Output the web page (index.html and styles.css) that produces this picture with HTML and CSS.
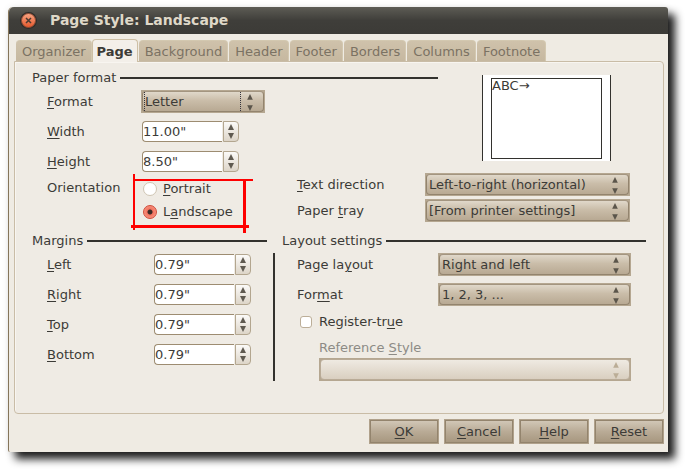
FILE: index.html
```html
<!DOCTYPE html>
<html lang="en">
<head>
  <meta charset="UTF-8">
  <title>Page Style: Landscape</title>
  <link rel="stylesheet" href="styles.css">
</head>
<body>

  <!-- shared arrow icons -->
  <svg class="sprite" aria-hidden="true">
    <symbol id="arrows" viewBox="0 0 6 18">
      <path d="M3 0 L6 6 H0 Z M0 12 H6 L3 18 Z"/>
    </symbol>
    <symbol id="up" viewBox="0 0 6 6"><path d="M3 0 L6 6 H0 Z"/></symbol>
    <symbol id="down" viewBox="0 0 6 6"><path d="M0 0 H6 L3 6 Z"/></symbol>
  </svg>

  <div class="window">
    <header class="titlebar">
      <button class="close" type="button" aria-label="Close">
        <svg width="17" height="17" viewBox="0 0 17 17">
          <defs>
            <linearGradient id="closeFill" x1="0" y1="0" x2="0" y2="1">
              <stop offset="0" stop-color="#f8a584"/>
              <stop offset="1" stop-color="#e4572a"/>
            </linearGradient>
          </defs>
          <circle cx="8.5" cy="8.5" r="8.5" fill="#2d2c29"/>
          <circle cx="8.5" cy="8.5" r="7" fill="url(#closeFill)" stroke="#8c4a34" stroke-width="1"/>
          <path d="M6 6 L11 11 M11 6 L6 11" stroke="#4a3a30" stroke-width="1.5"/>
        </svg>
      </button>
      <h1>Page Style: Landscape</h1>
    </header>

    <form class="content">
      <div class="tabs" role="tablist">
        <button type="button" role="tab">Organizer</button>
        <button type="button" role="tab" class="active" aria-selected="true">Page</button>
        <button type="button" role="tab">Background</button>
        <button type="button" role="tab">Header</button>
        <button type="button" role="tab">Footer</button>
        <button type="button" role="tab">Borders</button>
        <button type="button" role="tab">Columns</button>
        <button type="button" role="tab">Footnote</button>
      </div>

      <div class="panel">
        <div class="top">
          <section class="paper">
            <h2>Paper format</h2>
            <div class="rows">
              <div class="row">
                <label for="format"><u>F</u>ormat</label>
                <span class="select focused short">
                  <select id="format"><option>Letter</option></select>
                  <svg class="arrows"><use href="#arrows"/></svg>
                </span>
              </div>
              <div class="row">
                <label for="width"><u>W</u>idth</label>
                <span class="spin">
                  <input type="text" id="width" value='11.00"'>
                  <span class="steps">
                    <button type="button" aria-label="Increase width"><svg><use href="#up"/></svg></button>
                    <button type="button" aria-label="Decrease width"><svg><use href="#down"/></svg></button>
                  </span>
                </span>
              </div>
              <div class="row">
                <label for="height"><u>H</u>eight</label>
                <span class="spin">
                  <input type="text" id="height" value='8.50"'>
                  <span class="steps">
                    <button type="button" aria-label="Increase height"><svg><use href="#up"/></svg></button>
                    <button type="button" aria-label="Decrease height"><svg><use href="#down"/></svg></button>
                  </span>
                </span>
              </div>
            </div>
          </section>
          <div class="preview">
            <div class="sheet">ABC→</div>
          </div>
        </div>

        <div class="columns">
          <div class="orientation" role="radiogroup" aria-labelledby="orientation-label">
            <span class="caption" id="orientation-label">Orientation</span>
            <div class="options">
              <label><input type="radio" name="orientation"><span><u>P</u>ortrait</span></label>
              <label><input type="radio" name="orientation" checked><span>L<u>a</u>ndscape</span></label>
              <!-- red highlight round the two options -->
              <svg class="mark" viewBox="0 0 122 60" aria-hidden="true">
                <path d="M2 0h2v56h-2z M2 5h120v2h-120z M112 5h3v54h-3z M0 51h118v3h-118z"/>
              </svg>
            </div>
          </div>
          <div class="rows tight">
            <div class="row direction">
              <label for="direction"><u>T</u>ext direction</label>
              <span class="select">
                <select id="direction"><option>Left-to-right (horizontal)</option></select>
                <svg class="arrows"><use href="#arrows"/></svg>
              </span>
            </div>
            <div class="row direction">
              <label for="tray">Paper <u>t</u>ray</label>
              <span class="select">
                <select id="tray"><option>[From printer settings]</option></select>
                <svg class="arrows"><use href="#arrows"/></svg>
              </span>
            </div>
          </div>
        </div>

        <div class="columns lower">
          <section class="margins">
            <h2>Margins</h2>
            <div class="rows divided">
              <div class="row">
                <label for="left"><u>L</u>eft</label>
                <span class="spin">
                  <input type="text" id="left" value='0.79"'>
                  <span class="steps">
                    <button type="button" aria-label="Increase left"><svg><use href="#up"/></svg></button>
                    <button type="button" aria-label="Decrease left"><svg><use href="#down"/></svg></button>
                  </span>
                </span>
              </div>
              <div class="row">
                <label for="right"><u>R</u>ight</label>
                <span class="spin">
                  <input type="text" id="right" value='0.79"'>
                  <span class="steps">
                    <button type="button" aria-label="Increase right"><svg><use href="#up"/></svg></button>
                    <button type="button" aria-label="Decrease right"><svg><use href="#down"/></svg></button>
                  </span>
                </span>
              </div>
              <div class="row">
                <label for="top"><u>T</u>op</label>
                <span class="spin">
                  <input type="text" id="top" value='0.79"'>
                  <span class="steps">
                    <button type="button" aria-label="Increase top"><svg><use href="#up"/></svg></button>
                    <button type="button" aria-label="Decrease top"><svg><use href="#down"/></svg></button>
                  </span>
                </span>
              </div>
              <div class="row">
                <label for="bottom"><u>B</u>ottom</label>
                <span class="spin">
                  <input type="text" id="bottom" value='0.79"'>
                  <span class="steps">
                    <button type="button" aria-label="Increase bottom"><svg><use href="#up"/></svg></button>
                    <button type="button" aria-label="Decrease bottom"><svg><use href="#down"/></svg></button>
                  </span>
                </span>
              </div>
            </div>
          </section>

          <section class="layout">
            <h2>Layout settings</h2>
            <div class="rows">
              <div class="row">
                <label for="layout">Page la<u>y</u>out</label>
                <span class="select">
                  <select id="layout"><option>Right and left</option></select>
                  <svg class="arrows"><use href="#arrows"/></svg>
                </span>
              </div>
              <div class="row">
                <label for="numbering">For<u>m</u>at</label>
                <span class="select">
                  <select id="numbering"><option>1, 2, 3, ...</option></select>
                  <svg class="arrows"><use href="#arrows"/></svg>
                </span>
              </div>
            </div>
            <label class="check"><input type="checkbox"><span>Register-tr<u>u</u>e</span></label>
            <div class="reference">
              <label for="reference">Reference <u>S</u>tyle</label>
              <span class="select disabled">
                <select id="reference" disabled><option></option></select>
                <svg class="arrows"><use href="#arrows"/></svg>
              </span>
            </div>
          </section>
        </div>
      </div>

      <div class="actions">
        <button type="button"><u>O</u>K</button>
        <button type="button"><u>C</u>ancel</button>
        <button type="button"><u>H</u>elp</button>
        <button type="button"><u>R</u>eset</button>
      </div>
    </form>
  </div>

</body>
</html>
```
FILE: styles.css
```css
* {
  box-sizing: border-box;
}

body {
  margin: 0;
  padding: 7px 23px 23px 8px;
  background: #fff;
  color: #3c3b37;
  font: 13px/19px "DejaVu Sans", sans-serif;
}

button, input, select {
  margin: 0;
  color: inherit;
  font: inherit;
}

u {
  text-underline-offset: 2px;
}

.sprite {
  display: none;
}

.window {
  background: #efebe3;
  border-left: 1px solid #85755a;
  border-radius: 5px 3px 0 2px;
  box-shadow: 7px 7px 8px #1c1c1c, 0 0 7px rgba(0,0,0,0.08);
}

.titlebar {
  display: flex;
  align-items: center;
  gap: 13px;
  height: 27px;
  padding: 0 11px;
  background: linear-gradient(#5d5c55, #3f3e3a 50%, #3c3b37);
  border-radius: 5px 3px 0 0;
}

.titlebar h1 {
  margin: 0;
  color: #dfd8c8;
  font-size: 14px;
}

.close {
  display: flex;
  padding: 0;
  background: none;
  border: none;
}

.content {
  padding: 5px 4px 8px 5px;
}

/* tabs */
.tabs {
  display: flex;
  align-items: flex-end;
  gap: 1px;
  padding-left: 2px;
}

.tabs button {
  height: 21px;
  padding: 0 5px 0 6px;
  background: linear-gradient(#cfc2ab, #c6b8a0);
  border: 1px solid #d3c8b0;
  border-width: 1px 1px 0 0;
  border-radius: 4px 4px 0 0;
  color: #7b7263;
  line-height: 19px;
}

.tabs .active {
  height: 23px;
  margin: 0 0 -1px -1px;
  padding: 0 4px;
  background: #f3efe9;
  border: 1px solid #cdbfa5;
  border-bottom: none;
  color: #3c3b37;
  font-weight: bold;
  position: relative;
}

.panel {
  padding: 6px 17px 32px;
  background: #efebe4;
  border: 1px solid #c9bca6;
  border-radius: 0 4px 4px 4px;
  box-shadow: inset 1px 1px #f8f5f0;
}

h2 {
  display: flex;
  align-items: center;
  gap: 4px;
  margin: 0 0 3px;
  font-size: 13px;
  font-weight: normal;
}

h2::after {
  content: "";
  flex: 1;
  height: 2px;
  background: #33322e;
}

.top {
  display: flex;
}

.paper {
  flex: 1;
}

.columns {
  display: grid;
  grid-template-columns: 250px 1fr;
}

.lower {
  margin-top: 8px;
}

.rows {
  display: grid;
  gap: 7px;
  padding-left: 15px;
}

.tight {
  gap: 3px;
  align-content: start;
  padding-right: 16px;
}

.row {
  display: flex;
  align-items: center;
  height: 23px;
}

.row label {
  width: 94px;
}

.row.direction label {
  width: 128px;
}

.margins .row label {
  width: 107px;
}

.layout .row label {
  width: 141px;
}

/* drop-downs */
.select {
  position: relative;
  display: block;
  flex: 1;
  height: 23px;
  padding: 1px;
  background: #b5a791;
}

.select.short {
  flex: none;
  width: 124px;
}

.select select {
  display: block;
  width: 100%;
  height: 21px;
  padding: 0 24px 0 2px;
  appearance: none;
  background: linear-gradient(#e0d8ca, #cabda9 45%, #b8a993);
  border: 1px solid #93846e;
  border-top-color: #a39580;
  border-radius: 4px;
  line-height: 19px;
}

.select .arrows {
  position: absolute;
  top: 4px;
  right: 12px;
  width: 6px;
  height: 17px;
  fill: #5b554b;
  pointer-events: none;
}

.focused::after {
  content: "";
  position: absolute;
  top: 2px;
  bottom: 2px;
  left: 3px;
  right: 24px;
  border: 1px dotted #34343c;
  border-width: 0 1px;
  pointer-events: none;
}

.disabled select {
  background: linear-gradient(#efeae2, #d9cfc0);
  border-color: #b9ab97;
  opacity: 1;
}

.disabled .arrows {
  fill: #bbad96;
}

/* number boxes */
.spin {
  display: flex;
  gap: 1px;
  width: 97px;
  height: 21px;
  margin-left: 1px;
}

.margins .spin {
  margin-left: 0;
}

.spin input {
  flex: 1;
  min-width: 0;
  padding: 0;
  background: #fff;
  border: 1px solid #9d8c71;
  border-right: none;
  border-radius: 4px 0 0 4px;
}

.steps {
  display: flex;
  flex-direction: column;
  width: 16px;
  background: linear-gradient(#fbfaf8, #ddd5c8);
  border: 1px solid #b3a68f;
  border-radius: 0 4px 4px 0;
}

.steps button {
  display: flex;
  flex: 1;
  align-items: center;
  justify-content: center;
  padding: 0;
  background: none;
  border: none;
}

.steps svg {
  width: 6px;
  height: 6px;
  fill: #5f5a50;
}

/* page preview */
.preview {
  width: 129px;
  height: 86px;
  margin: 7px 35px 0 44px;
  padding: 3px 8px 2px;
  background: #fff;
  border: 1px solid #33322e;
  border-width: 0 1px;
}

.sheet {
  height: 81px;
  border: 1px solid #33322e;
  line-height: 14px;
}

/* orientation */
.orientation {
  display: flex;
  padding: 4px 0 0 15px;
}

.caption {
  width: 96px;
  line-height: 21px;
}

.options {
  position: relative;
}

.options label {
  display: flex;
  align-items: center;
  gap: 6px;
  height: 23px;
}

.options input {
  width: 14px;
  height: 14px;
  appearance: none;
  background: #fff;
  border: 1px solid #cfc5b3;
  border-radius: 50%;
}

.options input:checked {
  background: radial-gradient(circle, #3c2a26 2px, #f4735f 3px, #f58f7c 6px);
  border-color: #cf4a38;
}

.mark {
  position: absolute;
  top: -3px;
  left: -12px;
  width: 122px;
  height: 60px;
  fill: #fe0000;
  pointer-events: none;
}

/* margins and layout */
.divided {
  margin-right: 7px;
  height: 128px;
  align-content: start;
  border-right: 2px solid #33322e;
}

.margins h2 {
  margin-right: 15px;
}

.layout .rows {
  padding-right: 15px;
}

.check {
  display: flex;
  align-items: center;
  gap: 7px;
  margin: 6px 0 7px 18px;
}

.check input {
  width: 12px;
  height: 12px;
  appearance: none;
  background: #fff;
  border: 1px solid #bcae98;
  border-radius: 3px;
}

.reference {
  margin: 0 15px 0 37px;
  color: #8d8b86;
}

.reference label {
  display: block;
  margin-bottom: 1px;
}

/* bottom buttons */
.actions {
  display: flex;
  justify-content: flex-end;
  gap: 5px;
  margin-top: 5px;
}

.actions button {
  width: 70px;
  height: 25px;
  padding: 0;
  background: linear-gradient(#d3c9b9, #b9ab96 50%, #a6967e);
  border: 1px solid #b0a18b;
  box-shadow: inset 0 0 0 1px #93846d;
}
```
